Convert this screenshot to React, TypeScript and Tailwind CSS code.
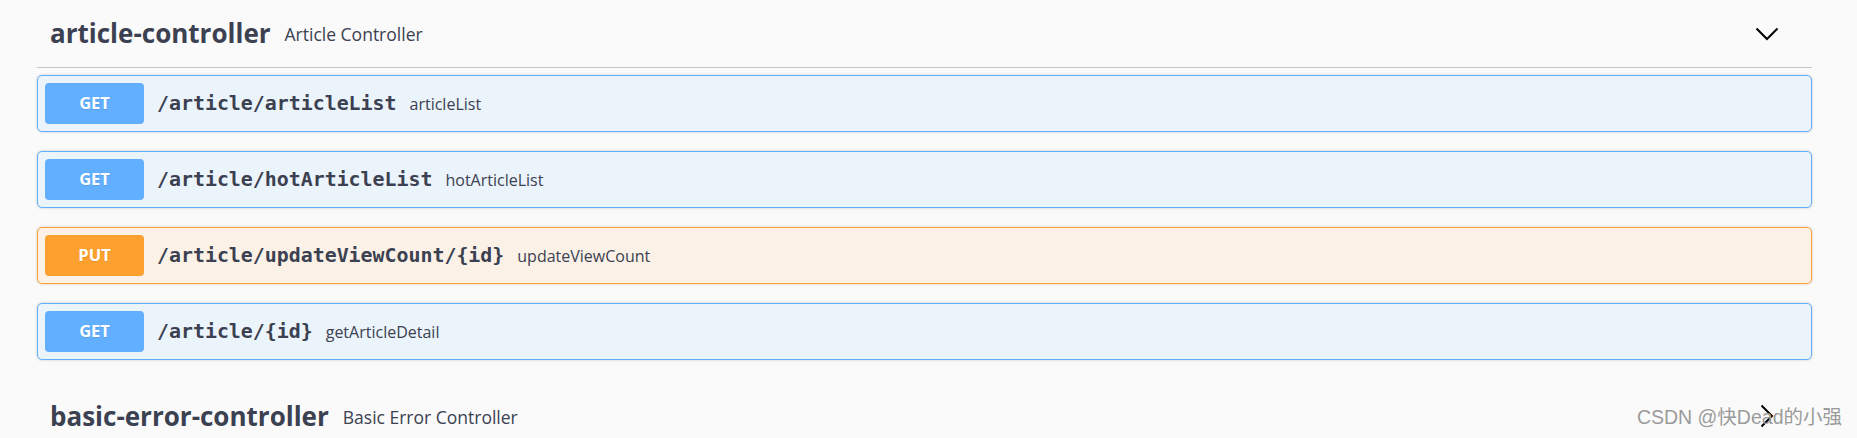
import React from 'react'

type Op = {
  method: 'GET' | 'PUT'
  path: string
  summary: string
}

const ops: Op[] = [
  { method: 'GET', path: '/article/articleList', summary: 'articleList' },
  { method: 'GET', path: '/article/hotArticleList', summary: 'hotArticleList' },
  { method: 'PUT', path: '/article/updateViewCount/{id}', summary: 'updateViewCount' },
  { method: 'GET', path: '/article/{id}', summary: 'getArticleDetail' },
]

function Chevron({ open }: { open: boolean }) {
  return (
    <svg
      width="24"
      height="14"
      viewBox="0 0 24 14"
      className={open ? '' : '-rotate-90'}
      fill="none"
      stroke="#000"
      strokeWidth="2"
    >
      <polyline points="1.5,1.5 12,12 22.5,1.5" />
    </svg>
  )
}

function TagHeader({ name, desc, open }: { name: string; desc: string; open: boolean }) {
  return (
    <div
      className={`flex h-[68px] items-center pl-[13px] pr-[33px] ${
        open ? 'border-b border-[#c4c6ca]' : ''
      }`}
    >
      <span className="font-['Open_Sans',sans-serif] text-[26px] font-bold text-[#3b4151]">{name}</span>
      <span className="ml-[14px] mt-[2px] font-['Open_Sans',sans-serif] text-[17.5px] text-[#3b4151]">{desc}</span>
      <div className="ml-auto flex">
        <Chevron open={open} />
      </div>
    </div>
  )
}

function OpBlock({ op }: { op: Op }) {
  const isGet = op.method === 'GET'
  return (
    <div
      className={`mb-[19px] flex h-[57px] items-center rounded-[5px] border pl-[7px] shadow-[0_0_3px_rgba(0,0,0,0.19)] ${
        isGet ? 'border-[#61affe] bg-[#ebf3fb]' : 'border-[#fca130] bg-[#fbf1e6]'
      }`}
    >
      <div
        className={`flex h-[41px] w-[99px] items-center justify-center rounded-[4px] font-['Open_Sans',sans-serif] text-[16.5px] font-bold text-white [text-shadow:0_1px_0_rgba(0,0,0,0.1)] ${
          isGet ? 'bg-[#61affe]' : 'bg-[#fca130]'
        }`}
      >
        {op.method}
      </div>
      <span className="ml-[13px] font-['DejaVu_Sans_Mono',monospace] text-[19.9px] font-bold text-[#3b4151]">
        {op.path}
      </span>
      <span className="ml-[13px] font-['Open_Sans',sans-serif] text-[16px] text-[#3b4151]">{op.summary}</span>
    </div>
  )
}

export default function App() {
  return (
    <div className="relative h-[438px] overflow-hidden bg-[#fafafa] pl-[37px] pr-[45px]">
      <section>
        <TagHeader name="article-controller" desc="Article Controller" open />
        <div className="pt-[7px]">
          {ops.map((op) => (
            <OpBlock key={op.path} op={op} />
          ))}
        </div>
      </section>
      <section className="pt-[3px]">
        <TagHeader name="basic-error-controller" desc="Basic Error Controller" open={false} />
      </section>
      <div className="absolute right-[15px] top-[408px] font-['Liberation_Sans','Noto_Sans_CJK_SC',sans-serif] text-[19.5px] leading-none text-[#9b9b9b]">
        CSDN @快Dead的小强
      </div>
    </div>
  )
}
